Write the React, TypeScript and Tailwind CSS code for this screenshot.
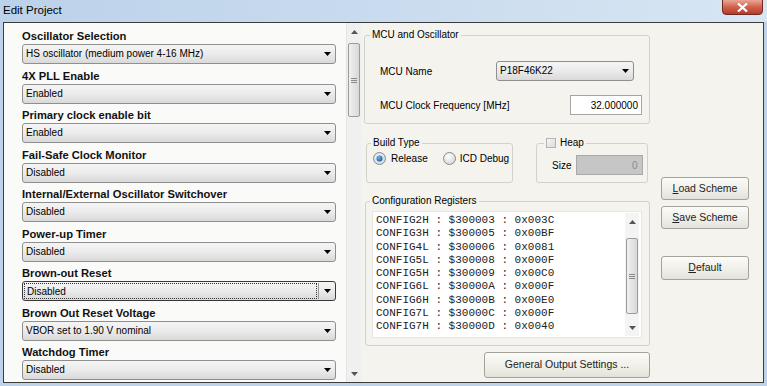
import React from 'react';

const ui = '"Liberation Sans", Arial, sans-serif';
const mono = '"Liberation Mono", "Courier New", monospace';

const fuses = [
  { label: 'Oscillator Selection', value: 'HS oscillator (medium power 4-16 MHz)' },
  { label: '4X PLL Enable', value: 'Enabled' },
  { label: 'Primary clock enable bit', value: 'Enabled' },
  { label: 'Fail-Safe Clock Monitor', value: 'Disabled' },
  { label: 'Internal/External Oscillator Switchover', value: 'Disabled' },
  { label: 'Power-up Timer', value: 'Disabled' },
  { label: 'Brown-out Reset', value: 'Disabled', focused: true },
  { label: 'Brown Out Reset Voltage', value: 'VBOR set to 1.90 V nominal' },
  { label: 'Watchdog Timer', value: 'Disabled' },
];

const registers = [
  ['CONFIG2H', '$300003', '0x003C'],
  ['CONFIG3H', '$300005', '0x00BF'],
  ['CONFIG4L', '$300006', '0x0081'],
  ['CONFIG5L', '$300008', '0x000F'],
  ['CONFIG5H', '$300009', '0x00C0'],
  ['CONFIG6L', '$30000A', '0x000F'],
  ['CONFIG6H', '$30000B', '0x00E0'],
  ['CONFIG7L', '$30000C', '0x000F'],
  ['CONFIG7H', '$30000D', '0x0040'],
];

const DownTri = ({ color = '#000' }: { color?: string }) => (
  <svg width="7" height="4" viewBox="0 0 7 4">
    <path d="M0 0h7L3.5 4z" fill={color} />
  </svg>
);

const UpTri = ({ color = '#555' }: { color?: string }) => (
  <svg width="7" height="4" viewBox="0 0 7 4">
    <path d="M0 4h7L3.5 0z" fill={color} />
  </svg>
);

const Combo = ({ value, focused, className = '' }: { value: string; focused?: boolean; className?: string }) => (
  <div
    className={`h-[20px] flex items-center rounded-[3px] border bg-gradient-to-b from-[#f5f5f5] via-[#ebebeb] to-[#d9d9d9] ${
      focused ? 'border-[#3a3a3a]' : 'border-[#8e8f8f]'
    } ${className}`}
  >
    {focused ? (
      <div className="flex-1 h-[16px] ml-[1px] border border-dotted border-[#333] flex items-center pl-[2px] text-[10px] text-black">
        {value}
      </div>
    ) : (
      <div className="flex-1 pl-[3px] text-[10px] text-black leading-none">{value}</div>
    )}
    {focused && <div className="w-px h-[16px] bg-[#9a9a9a] ml-[1px]" />}
    <div className="w-[16px] flex justify-center">
      <DownTri />
    </div>
  </div>
);

const Grip = () => (
  <div className="flex flex-col gap-[1px] items-center">
    <div className="w-[6px] h-px bg-[#8a8a8a]" />
    <div className="w-[6px] h-px bg-[#8a8a8a]" />
    <div className="w-[6px] h-px bg-[#8a8a8a]" />
  </div>
);

const ScrollBar = ({ before, thumb, className = '' }: { before: number; thumb: number; className?: string }) => (
  <div className={`flex flex-col items-center bg-[#f0f0f0] ${className}`}>
    <div className="h-[17px] flex items-center justify-center">
      <UpTri />
    </div>
    <div style={{ height: before }} />
    <div
      className="w-[12px] rounded-[2px] border border-[#9b9b9b] bg-gradient-to-r from-[#f1f1f1] to-[#d8d8d8] flex items-center justify-center"
      style={{ height: thumb }}
    >
      <Grip />
    </div>
    <div className="flex-1" />
    <div className="h-[16px] flex items-center justify-center">
      <DownTri color="#555" />
    </div>
  </div>
);

const Radio = ({ checked }: { checked?: boolean }) => (
  <svg width="13" height="13" viewBox="0 0 13 13" className="shrink-0">
    <defs>
      <radialGradient id={checked ? 'rOn' : 'rOff'} cx="0.4" cy="0.35" r="0.7">
        <stop offset="0" stopColor={checked ? '#e9f3fb' : '#ffffff'} />
        <stop offset="1" stopColor={checked ? '#c9d9e6' : '#d4d4d4'} />
      </radialGradient>
      <radialGradient id="dot" cx="0.4" cy="0.35" r="0.7">
        <stop offset="0" stopColor="#79b2e3" />
        <stop offset="1" stopColor="#1d5a8c" />
      </radialGradient>
    </defs>
    <circle cx="6.5" cy="6.5" r="6" fill={`url(#${checked ? 'rOn' : 'rOff'})`} stroke="#8a8a8a" />
    {checked && <circle cx="6.5" cy="6.5" r="3" fill="url(#dot)" />}
  </svg>
);

const Button = ({ children, className = '' }: { children: React.ReactNode; className?: string }) => (
  <div
    className={`flex items-center justify-center whitespace-nowrap rounded-[3px] border border-[#a3a39a] bg-gradient-to-b from-[#fbfbf8] via-[#f1f0ea] to-[#e3e2da] text-[10.5px] text-[#222] ${className}`}
  >
    {children}
  </div>
);

export default function App() {
  return (
    <div
      className="w-[767px] h-[386px] flex flex-col bg-[#bed3ea] overflow-hidden"
      style={{ fontFamily: ui }}
    >
      {/* title bar */}
      <div className="h-[22px] flex items-start bg-gradient-to-r from-[#bcd2ea] via-[#c9dbee] to-[#d8e6f3]">
        <span className="pl-[3px] pt-[2px] text-[11.5px] text-black">Edit Project</span>
        <div className="ml-auto mr-[4px] w-[41px] h-[16px] -mt-px rounded-b-[4px] border border-[#6e2b22] bg-gradient-to-b from-[#e9a596] via-[#d2614c] to-[#b8382a] flex items-center justify-center">
          <svg width="11" height="9" viewBox="0 0 11 9">
            <path d="M1 0.5l9 8M10 0.5l-9 8" stroke="#fff" strokeWidth="2.2" />
          </svg>
        </div>
      </div>

      {/* dialog body */}
      <div className="flex-1 mx-[3px] mb-[3px] border border-[#3c3c3c] flex bg-[#f4f3ee]">
        {/* fuse list */}
        <div className="w-[357px] flex bg-[#fafaf8]">
          <div className="flex-1 pl-[18px] pr-[10px] pt-[1.5px] overflow-hidden">
            {fuses.map((f) => (
              <div key={f.label}>
                <div className="h-[19.5px] pt-[4.5px] leading-[14px] text-[11.2px] font-bold text-[#111]">{f.label}</div>
                <Combo value={f.value} focused={f.focused} />
              </div>
            ))}
          </div>
          <ScrollBar before={3} thumb={74} className="w-[15px] border-l border-[#e4e4e4]" />
        </div>

        {/* right side */}
        <div className="flex-1 flex pl-[3px] pt-[5px] text-[10px] text-black">
          <div className="w-[286px] flex flex-col">
            <fieldset className="h-[96px] border border-[#d3d2c8] rounded-[3px]">
              <legend className="ml-[5px] px-[2px] leading-[14px]">MCU and Oscillator</legend>
              <div className="mt-[19px] h-[20px] flex items-center pl-[15px]">
                <span className="w-[116px]">MCU Name</span>
                <Combo value="P18F46K22" className="w-[138px]" />
              </div>
              <div className="mt-[14px] h-[20px] flex items-center pl-[15px]">
                <span>MCU Clock Frequency [MHz]</span>
                <div className="ml-auto mr-[7px] w-[72px] h-[20px] border border-[#a5a5a5] bg-white flex items-center justify-end pr-[3px]">
                  32.000000
                </div>
              </div>
            </fieldset>

            <div className="mt-[12px] flex pl-[2px]">
              <fieldset className="w-[147px] h-[47px] border border-[#d3d2c8] rounded-[3px]">
                <legend className="ml-[4px] px-[2px] leading-[14px]">Build Type</legend>
                <div className="mt-[1px] h-[14px] flex items-center pl-[6px] whitespace-nowrap">
                  <Radio checked />
                  <span className="ml-[5px]">Release</span>
                  <span className="ml-[15px] flex items-center">
                    <Radio />
                  </span>
                  <span className="ml-[4px]">ICD Debug</span>
                </div>
              </fieldset>
              <fieldset className="ml-[23px] w-[112px] h-[47px] border border-[#d3d2c8] rounded-[3px]">
                <legend className="ml-[7px] px-[2px] leading-[14px] flex items-center">
                  <span className="w-[10px] h-[10px] border border-[#b4b4b4] bg-gradient-to-br from-[#f6f6f6] to-[#dcdcdc]" />
                  <span className="ml-[4px]">Heap</span>
                </legend>
                <div className="mt-[5px] h-[20px] flex items-center pl-[15px]">
                  <span>Size</span>
                  <div className="ml-[5px] w-[67px] h-[20px] border border-[#a9a9a9] bg-[#c6c6c6] flex items-center justify-end pr-[5px] text-[#8a8a8a]">
                    0
                  </div>
                </div>
              </fieldset>
            </div>

            <fieldset className="mt-[11px] ml-[1px] w-[285px] h-[152px] border border-[#d3d2c8] rounded-[3px]">
              <legend className="ml-[4px] px-[2px] leading-[14px]">Configuration Registers</legend>
              <div className="mt-[3px] ml-[6px] w-[270px] h-[127px] bg-white border border-[#e6e6e6] flex">
                <div className="flex-1 pt-[2px] pl-[3px] text-[11px] leading-[13.25px] text-[#222]" style={{ fontFamily: mono }}>
                  {registers.map((r) => (
                    <div key={r[0]} className="whitespace-pre">{`${r[0]} : ${r[1]} : ${r[2]}`}</div>
                  ))}
                </div>
                <ScrollBar before={8} thumb={76} className="w-[14px] my-[1px] mr-[2px] bg-[#f4f4f4]" />
              </div>
            </fieldset>

            <Button className="mt-[6px] ml-auto w-[166px] h-[26px]">General Output Settings ...</Button>
          </div>

          <div className="ml-[11px] w-[88px] flex flex-col">
            <Button className="mt-[149px] h-[23px]">
              <span className="underline">L</span>oad Scheme
            </Button>
            <Button className="mt-[6px] h-[23px]">
              <span className="underline">S</span>ave Scheme
            </Button>
            <Button className="mt-[27px] h-[24px]">
              <span className="underline">D</span>efault
            </Button>
          </div>
        </div>
      </div>
    </div>
  );
}
